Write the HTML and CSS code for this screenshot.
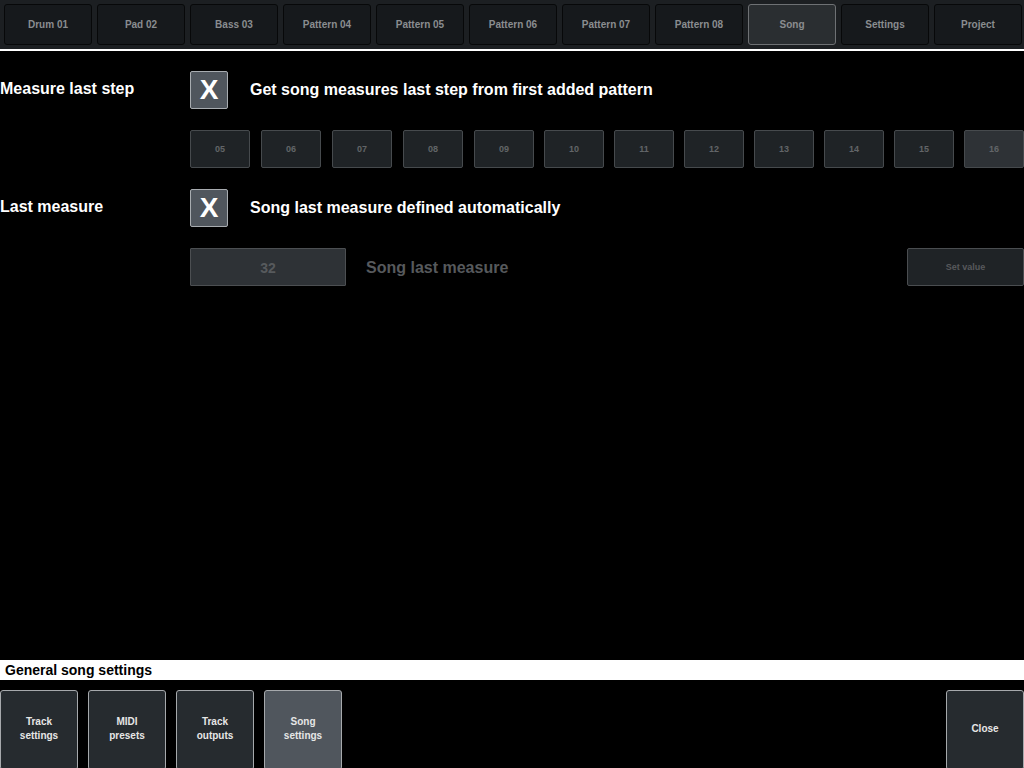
FILE: index.html
```html
<!DOCTYPE html>
<html>
<head>
<meta charset="utf-8">
<link rel="stylesheet" href="styles.css">
</head>
<body>
<div class="app">
  <nav class="tabs">
    <div class="tab">Drum 01</div>
    <div class="tab">Pad 02</div>
    <div class="tab">Bass 03</div>
    <div class="tab">Pattern 04</div>
    <div class="tab">Pattern 05</div>
    <div class="tab">Pattern 06</div>
    <div class="tab">Pattern 07</div>
    <div class="tab">Pattern 08</div>
    <div class="tab active">Song</div>
    <div class="tab">Settings</div>
    <div class="tab">Project</div>
  </nav>
  <main class="content">
    <div class="row">
      <div class="label">Measure last step</div>
      <div class="check">X</div>
      <div class="desc">Get song measures last step from first added pattern</div>
    </div>
    <div class="steps">
      <div class="step">05</div>
      <div class="step">06</div>
      <div class="step">07</div>
      <div class="step">08</div>
      <div class="step">09</div>
      <div class="step">10</div>
      <div class="step">11</div>
      <div class="step">12</div>
      <div class="step">13</div>
      <div class="step">14</div>
      <div class="step">15</div>
      <div class="step sel">16</div>
    </div>
    <div class="row row2">
      <div class="label">Last measure</div>
      <div class="check">X</div>
      <div class="desc">Song last measure defined automatically</div>
    </div>
    <div class="valrow">
      <div class="valbox">32</div>
      <div class="vallabel">Song last measure</div>
      <div class="setbtn">Set value</div>
    </div>
  </main>
  <div class="footer-title">General song settings</div>
  <footer class="bottom">
    <div class="bbtn">Track<br>settings</div>
    <div class="bbtn">MIDI<br>presets</div>
    <div class="bbtn">Track<br>outputs</div>
    <div class="bbtn active">Song<br>settings</div>
    <div class="spacer"></div>
    <div class="bbtn close">Close</div>
  </footer>
</div>
</body>
</html>
```

FILE: styles.css
```css
* { box-sizing: border-box; }
html, body { margin: 0; padding: 0; background: #000; }
body { font-family: "Liberation Sans", Arial, sans-serif; font-weight: bold; }
.app { width: 1024px; height: 768px; display: flex; flex-direction: column; overflow: hidden; }
.tabs {
  height: 51px; background: #1c1f22; display: flex; gap: 5px;
  padding: 4px 0 0 4px; border-bottom: 2px solid #fff; flex-shrink: 0;
}
.tab {
  width: 88px; height: 41px; background: #16191c; border: 1px solid #070809;
  border-radius: 3px; color: #8a8d90; font-size: 10px;
  display: flex; align-items: center; justify-content: center;
}
.tab.active { background: #2a2e31; border-color: #6e7174; }
.content { flex: 1; position: relative; }
.row { display: flex; align-items: center; height: 38px; margin-top: 20px; }
.row2 { margin-top: 21px; }
.label { width: 190px; color: #fff; font-size: 16px; padding-bottom: 2px; }
.check {
  width: 38px; height: 38px; background: #50565d; border: 1px solid #a8acb0;
  border-radius: 2px; color: #fff; font-size: 28px; display: flex;
  align-items: center; justify-content: center; line-height: 1;
}
.desc { margin-left: 22px; color: #fff; font-size: 16px; }
.steps { display: flex; gap: 10px; margin: 21px 0 0 190px; }
.step {
  width: 60px; height: 38px; flex-shrink: 0; background: #1f2326; border: 1px solid #464a4d;
  border-radius: 2px; color: #626568; font-size: 9px; display: flex;
  align-items: center; justify-content: center;
}
.step:nth-child(-n+5):not(:first-child) { margin-left: 1px; }
.step.sel { background: #2e3236; }
.valrow { display: flex; align-items: center; margin: 21px 0 0 190px; height: 38px; }
.valbox {
  width: 156px; height: 38px; background: #2e3236; border: 1px solid #4c4f52;
  border-radius: 1px; color: #575a5d; font-size: 14px; display: flex;
  align-items: center; justify-content: center; padding-top: 2px;
}
.vallabel { margin-left: 20px; color: #56595c; font-size: 16px; padding-top: 1px; }
.setbtn {
  margin-left: auto; width: 117px; height: 38px; background: #1f2326;
  border: 1px solid #4a4d50; border-radius: 2px; color: #57595c; font-size: 9px;
  display: flex; align-items: center; justify-content: center;
}
.footer-title {
  height: 20px; background: #fff; color: #000; font-size: 14px;
  padding: 2px 0 0 5px; margin-bottom: 10px; flex-shrink: 0;
}
.bottom { display: flex; gap: 10px; height: 78px; flex-shrink: 0; }
.bbtn {
  width: 78px; height: 80px; background: #262b2f; border: 1px solid #a6a9ac;
  border-radius: 3px; color: #e6e6e6; font-size: 10px; line-height: 14px;
  text-align: center; display: flex; align-items: center; justify-content: center;
  padding-bottom: 2px;
}
.bbtn.active { background: #50565d; }
.spacer { flex: 1; }
.bbtn.close { margin-left: -10px; }
```
